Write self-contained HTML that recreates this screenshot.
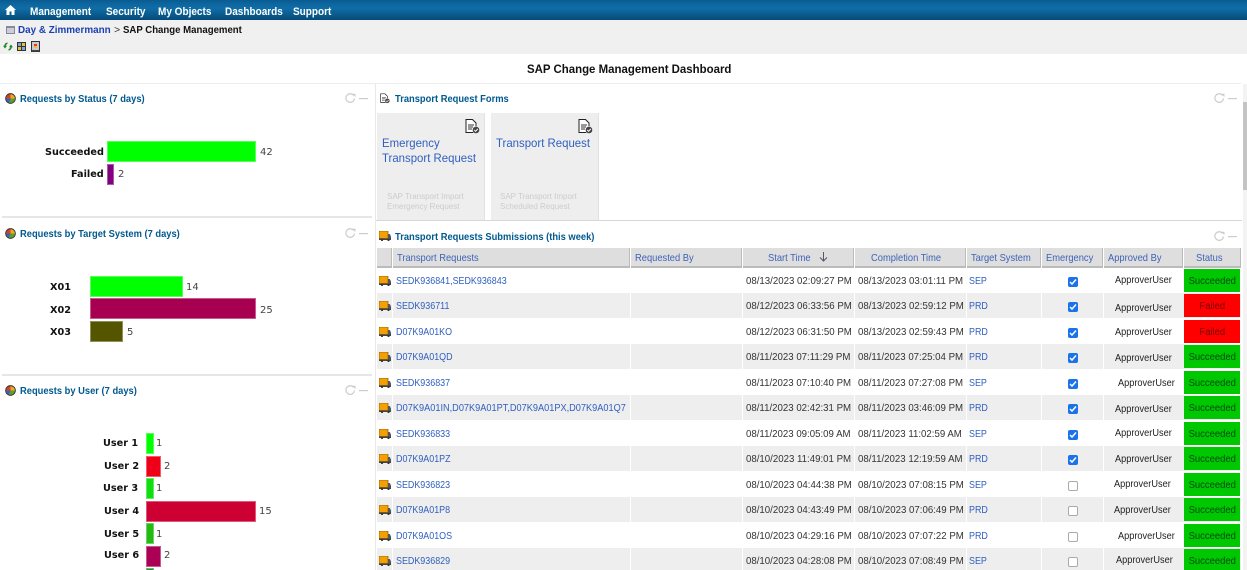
<!DOCTYPE html>
<html><head><meta charset="utf-8"><title>SAP Change Management Dashboard</title>
<style>
html,body{margin:0;padding:0;width:1247px;height:570px;overflow:hidden;background:#fff;font-family:"Liberation Sans",sans-serif}
#p{position:relative;width:1247px;height:570px;overflow:hidden}
.a,.t,.b,.l,.v,.nav,.pt,.c{position:absolute;white-space:nowrap}
.nav{top:5px;color:#fff;font:bold 11px/14px "Liberation Sans",sans-serif;transform:scaleX(.91);transform-origin:left center}
.pt{color:#00598f;font:bold 10.5px/14px "Liberation Sans",sans-serif;transform:scaleX(.89);transform-origin:left center;margin-top:1px}
.l{font:bold 9.7px/14px "DejaVu Sans",sans-serif;color:#111;margin-top:1px}
.v{font:10px/14px "DejaVu Sans",sans-serif;color:#444;margin-top:1px}
.b{box-sizing:border-box;height:21px;border:1px solid rgba(255,255,255,.35)}
.hr{position:absolute;height:2px;background:#e6e6e6}
.h{position:absolute;top:248px;height:20px;box-sizing:border-box;background:#dedede;border-bottom:2px solid #bbb;border-right:1px solid #bbb;color:#3f62b8;font:10.5px/20px "Liberation Sans",sans-serif;white-space:nowrap}
.h span{display:inline-block;transform:scaleX(.89);transform-origin:left center}
.r{position:absolute;left:377px;width:864px;height:25px;font:10.5px/25px "Liberation Sans",sans-serif;color:#333}
.e{background:#eee}
.r span{position:absolute;white-space:nowrap;top:1px;transform:scaleX(.92);transform-origin:left center}
.r span.k{color:#2f5fc0;transform:scaleX(.85)}
.sep{position:absolute;top:0;width:1px;height:25px;background:#fff}
.r span.ap{font-size:10px;color:#222;transform:scaleX(.92)}
.st{position:absolute;left:807px;top:1px;width:56px;height:23px;line-height:25px;text-align:center;background:#00c800;color:#034a12;font-size:10.5px}
.st b{font-weight:normal;display:inline-block;transform:scaleX(.9)}
.st.f{background:#ff0000;color:#700}
.cb{position:absolute;left:691px;top:9px;width:10px;height:10px;border-radius:2px;box-sizing:border-box}
.on{background:#1a73e8}
.off{background:#fff;border:1px solid #aaa}
.r svg.ck{left:692px;top:10px}
.card{position:absolute;top:113px;height:107px;background:#eee;border-right:1px solid #e2e2e2;box-sizing:border-box}
.ct{position:absolute;color:#2f5fc0;font:12px/15px "Liberation Sans",sans-serif;white-space:nowrap;transform:scaleX(.95);transform-origin:left center}
.cs{position:absolute;color:#ccc;font:8px/11px "Liberation Sans",sans-serif;white-space:nowrap}
svg{position:absolute;overflow:visible}
</style></head><body><div id="p">
<svg width="0" height="0" style="position:absolute"><defs>
<symbol id="truck" viewBox="0 0 12 10"><rect x="0" y="0" width="9" height="7.500" fill="#f5a000" stroke="#7a5a20" stroke-width=".7"/><path d="M9 3h1.800L12 5.500V8.500H9z" fill="#555"/><rect x="0" y="7.500" width="12" height="1.500" fill="#444"/><circle cx="3" cy="9" r="1.100" fill="#333"/><circle cx="9.500" cy="9" r="1.100" fill="#333"/></symbol>
<symbol id="pie" viewBox="0 0 12 12"><circle cx="6" cy="6" r="5.800" fill="#333"/><path d="M6 6V1.200A4.800 4.800 0 0 1 10.800 6z" fill="#f0a820"/><path d="M6 6h4.800A4.800 4.800 0 0 1 4 10.400z" fill="#5aa030"/><path d="M6 6L4 10.400A4.800 4.800 0 0 1 1.200 6z" fill="#3a60c0"/><path d="M6 6H1.200A4.800 4.800 0 0 1 6 1.200z" fill="#d84020"/></symbol>
<symbol id="ref" viewBox="0 0 24 11"><path d="M8.600 2.400A4.300 4.300 0 1 0 9.500 5.500" fill="none" stroke="#ccc" stroke-width="1.200"/><path d="M7.200 .8h3.300v3.300z" fill="#ccc"/><rect x="14" y="5" width="9" height="1.200" fill="#ccc"/></symbol>
<symbol id="doc" viewBox="0 0 15 15"><path d="M1 .5h6.500L11 4v9.500H1z" fill="#fff" stroke="#222" stroke-width="1"/><path d="M3 6h6M3 8h5M3 10h4" stroke="#333" stroke-width=".9"/><circle cx="11" cy="11" r="3.600" fill="#444" stroke="#fff" stroke-width=".5"/><path d="M9.300 11l1.300 1.300 2.200-2.400" fill="none" stroke="#fff" stroke-width="1"/></symbol>
<symbol id="tick" viewBox="0 0 8 8"><path d="M1 4l2 2 4-4.500" fill="none" stroke="#fff" stroke-width="1.500"/></symbol>
</defs></svg>

<!-- nav -->
<div class="a" style="left:0;top:0;width:1247px;height:20px;background:linear-gradient(#0a5c92,#0f6ea8 40%,#064a78)"></div>
<svg style="left:5px;top:5px" width="11" height="10" viewBox="0 0 11 10"><path d="M5.500 0L11 5H9.500V10H6.500V6.500H4.500V10H1.500V5H0z" fill="#fff"/></svg>
<div class="nav" style="left:30px">Management</div>
<div class="nav" style="left:106px">Security</div>
<div class="nav" style="left:158px">My Objects</div>
<div class="nav" style="left:225px">Dashboards</div>
<div class="nav" style="left:293px">Support</div>

<!-- breadcrumb -->
<div class="a" style="left:0;top:20px;width:1247px;height:34px;background:#f0f0f0"></div>
<svg style="left:6px;top:26px" width="9" height="8" viewBox="0 0 9 8"><rect width="9" height="8" fill="#889"/><rect y="2" x="1" width="7" height="5" fill="#ccd"/></svg>
<div class="t" style="left:18px;top:23px;font:bold 10.5px/14px 'Liberation Sans',sans-serif;color:#1a3fb0;transform:scaleX(.94);transform-origin:left center">Day &amp; Zimmermann</div>
<div class="t" style="left:114px;top:23px;font:10.5px/14px 'Liberation Sans',sans-serif;color:#333">&gt;</div>
<div class="t" style="left:123px;top:23px;font:bold 10.5px/14px 'Liberation Sans',sans-serif;color:#111;transform:scaleX(.915);transform-origin:left center">SAP Change Management</div>
<svg style="left:3px;top:41px" width="10" height="11" viewBox="0 0 10 11"><path d="M4.500 1.500C2.500 1.700 1.500 3 1.300 4.800H0L2 7.500 4 4.800H2.800C3 3.800 3.600 3.200 4.500 3z" fill="#1a8a1a"/><path d="M5.500 9.500C7.500 9.300 8.500 8 8.700 6.200H10L8 3.500 6 6.200H7.200C7 7.200 6.400 7.800 5.500 8z" fill="#1a8a1a"/></svg>
<svg style="left:17px;top:42px" width="9" height="9" viewBox="0 0 9 9"><rect width="9" height="9" fill="#333"/><rect x="1" y="1" width="3" height="3" fill="#7ac"/><rect x="5" y="1" width="3" height="3" fill="#eb4"/><rect x="1" y="5" width="3" height="3" fill="#eb4"/><rect x="5" y="5" width="3" height="3" fill="#7ac"/></svg>
<svg style="left:31px;top:41px" width="9" height="11" viewBox="0 0 9 11"><rect x=".5" y=".5" width="8" height="10" fill="#ccc" stroke="#333"/><rect x="1" y="9" width="7" height="1.500" fill="#444"/><rect x="3" y="3" width="3" height="2" fill="#e33"/><rect x="3" y="5" width="3" height="2" fill="#eb4"/></svg>

<div class="t" style="left:527px;top:62px;font:bold 12px/15px 'Liberation Sans',sans-serif;color:#111;transform:scaleX(.953);transform-origin:left center">SAP Change Management Dashboard</div>
<div class="a" style="left:0;top:83px;width:1241px;height:1px;background:#eee"></div>
<div class="a" style="left:375px;top:84px;width:1px;height:486px;background:#e8e8e8"></div>

<!-- left panels -->
<svg style="left:5px;top:93px" width="11" height="11"><use href="#pie" width="11" height="11"/></svg>
<div class="pt" style="left:20px;top:91px">Requests by Status (7 days)</div>
<svg style="left:345px;top:93px" width="24" height="11"><use href="#ref" width="24" height="11"/></svg>
<div class="l" style="left:45px;top:145px">Succeeded</div>
<div class="l" style="left:71px;top:167px">Failed</div>
<div class="b" style="left:107px;top:141px;width:149px;background:#00ff00"></div>
<div class="b" style="left:107px;top:164px;width:7px;background:#800080"></div>
<div class="v" style="left:260px;top:145px">42</div>
<div class="v" style="left:118px;top:167px">2</div>

<div class="hr" style="left:2px;top:216px;width:370px"></div>
<svg style="left:5px;top:228px" width="11" height="11"><use href="#pie" width="11" height="11"/></svg>
<div class="pt" style="left:20px;top:226px">Requests by Target System (7 days)</div>
<svg style="left:345px;top:228px" width="24" height="11"><use href="#ref" width="24" height="11"/></svg>
<div class="l" style="left:50px;top:280px">X01</div>
<div class="l" style="left:50px;top:303px">X02</div>
<div class="l" style="left:50px;top:325px">X03</div>
<div class="b" style="left:90px;top:276px;width:93px;background:#00ff00"></div>
<div class="b" style="left:90px;top:298px;width:166px;background:#a80050"></div>
<div class="b" style="left:90px;top:321px;width:33px;background:#555500"></div>
<div class="v" style="left:186px;top:280px">14</div>
<div class="v" style="left:260px;top:303px">25</div>
<div class="v" style="left:127px;top:325px">5</div>

<div class="hr" style="left:2px;top:374px;width:370px"></div>
<svg style="left:5px;top:385px" width="11" height="11"><use href="#pie" width="11" height="11"/></svg>
<div class="pt" style="left:20px;top:383px">Requests by User (7 days)</div>
<svg style="left:345px;top:385px" width="24" height="11"><use href="#ref" width="24" height="11"/></svg>
<div class="l" style="left:103px;top:436px">User 1</div>
<div class="l" style="left:104px;top:459px">User 2</div>
<div class="l" style="left:103px;top:481px">User 3</div>
<div class="l" style="left:104px;top:504px">User 4</div>
<div class="l" style="left:104px;top:527px">User 5</div>
<div class="l" style="left:104px;top:548px">User 6</div>
<div class="b" style="left:146px;top:433px;width:8px;background:#00ff00"></div>
<div class="b" style="left:146px;top:456px;width:15px;background:#f00018"></div>
<div class="b" style="left:146px;top:478px;width:8px;background:#11dd11"></div>
<div class="b" style="left:146px;top:501px;width:110px;background:#cc0033"></div>
<div class="b" style="left:146px;top:523px;width:8px;background:#22bb11"></div>
<div class="b" style="left:146px;top:546px;width:15px;background:#aa0055"></div>
<div class="b" style="left:146px;top:568px;width:8px;background:#229922"></div>
<div class="v" style="left:156px;top:436px">1</div>
<div class="v" style="left:164px;top:459px">2</div>
<div class="v" style="left:156px;top:481px">1</div>
<div class="v" style="left:259px;top:504px">15</div>
<div class="v" style="left:156px;top:527px">1</div>
<div class="v" style="left:164px;top:548px">2</div>

<!-- forms -->
<svg style="left:380px;top:93px" width="10" height="11" viewBox="0 0 15 15"><use href="#doc" width="15" height="15"/></svg>
<div class="pt" style="left:395px;top:91px">Transport Request Forms</div>
<svg style="left:1214px;top:93px" width="24" height="11"><use href="#ref" width="24" height="11"/></svg>
<div class="card" style="left:377px;width:108px"></div>
<div class="card" style="left:491px;width:108px"></div>
<svg style="left:465px;top:119px" width="15" height="15"><use href="#doc" width="15" height="15"/></svg>
<svg style="left:578px;top:119px" width="15" height="15"><use href="#doc" width="15" height="15"/></svg>
<div class="ct" style="left:382px;top:136px">Emergency</div>
<div class="ct" style="left:382px;top:151px">Transport Request</div>
<div class="ct" style="left:496px;top:136px">Transport Request</div>
<div class="cs" style="left:387px;top:191px">SAP Transport Import</div>
<div class="cs" style="left:387px;top:201px">Emergency Request</div>
<div class="cs" style="left:500px;top:191px">SAP Transport Import</div>
<div class="cs" style="left:500px;top:201px">Scheduled Request</div>
<div class="a" style="left:376px;top:220px;width:866px;height:1px;background:#d8d8d8"></div>

<!-- table title -->
<svg style="left:379px;top:231px" width="12" height="10"><use href="#truck" width="12" height="10"/></svg>
<div class="pt" style="left:395px;top:229px">Transport Requests Submissions (this week)</div>
<svg style="left:1214px;top:231px" width="24" height="11"><use href="#ref" width="24" height="11"/></svg>

<!-- table header -->
<div class="h" style="left:377px;width:15px"></div>
<div class="h" style="left:393px;width:237px;padding-left:4px"><span>Transport Requests</span></div>
<div class="h" style="left:631px;width:111px;padding-left:4px"><span>Requested By</span></div>
<div class="h" style="left:743px;width:111px;padding-left:25px"><span>Start Time</span></div>
<svg style="left:819px;top:252px" width="9" height="10" viewBox="0 0 9 10"><path d="M4.500 0V9M1 5.500L4.500 9 8 5.500" fill="none" stroke="#556" stroke-width="1"/></svg>
<div class="h" style="left:855px;width:111px;padding-left:16px"><span>Completion Time</span></div>
<div class="h" style="left:967px;width:74px;padding-left:4px"><span>Target System</span></div>
<div class="h" style="left:1042px;width:61px;padding-left:4px"><span>Emergency</span></div>
<div class="h" style="left:1104px;width:79px;padding-left:4px"><span>Approved By</span></div>
<div class="h" style="left:1184px;width:57px;padding-left:12px"><span>Status</span></div>

<!-- rows -->
<div class="r" style="top:268px"><svg style="left:2px;top:8px" width="12" height="10"><use href="#truck" width="12" height="10"/></svg><span class="k" style="left:19px">SEDK936841,SEDK936843</span><span style="left:369px">08/13/2023 02:09:27 PM</span><span style="left:481px">08/13/2023 03:01:11 PM</span><span class="k" style="left:592px">SEP</span><i class="cb on"></i><svg class="ck" width="8" height="8"><use href="#tick" width="8" height="8"/></svg><span class="ap" style="left:738px;top:0">ApproverUser</span><div class="st"><b>Succeeded</b></div></div>

<div class="r e" style="top:293px"><i class="sep" style="left:15px"></i><i class="sep" style="left:253px"></i><i class="sep" style="left:365px"></i><i class="sep" style="left:477px"></i><i class="sep" style="left:589px"></i><i class="sep" style="left:664px"></i><i class="sep" style="left:726px"></i><svg style="left:2px;top:8px" width="12" height="10"><use href="#truck" width="12" height="10"/></svg><span class="k" style="left:19px">SEDK936711</span><span style="left:369px">08/12/2023 06:33:56 PM</span><span style="left:481px">08/13/2023 02:59:12 PM</span><span class="k" style="left:592px">PRD</span><i class="cb on"></i><svg class="ck" width="8" height="8"><use href="#tick" width="8" height="8"/></svg><span class="ap" style="left:738px;top:3px">ApproverUser</span><div class="st f"><b>Failed</b></div></div>

<div class="r" style="top:319px"><svg style="left:2px;top:8px" width="12" height="10"><use href="#truck" width="12" height="10"/></svg><span class="k" style="left:19px">D07K9A01KO</span><span style="left:369px">08/12/2023 06:31:50 PM</span><span style="left:481px">08/13/2023 02:59:43 PM</span><span class="k" style="left:592px">PRD</span><i class="cb on"></i><svg class="ck" width="8" height="8"><use href="#tick" width="8" height="8"/></svg><span class="ap" style="left:738px;top:1px">ApproverUser</span><div class="st f"><b>Failed</b></div></div>

<div class="r e" style="top:344px"><i class="sep" style="left:15px"></i><i class="sep" style="left:253px"></i><i class="sep" style="left:365px"></i><i class="sep" style="left:477px"></i><i class="sep" style="left:589px"></i><i class="sep" style="left:664px"></i><i class="sep" style="left:726px"></i><svg style="left:2px;top:8px" width="12" height="10"><use href="#truck" width="12" height="10"/></svg><span class="k" style="left:19px">D07K9A01QD</span><span style="left:369px">08/11/2023 07:11:29 PM</span><span style="left:481px">08/11/2023 07:25:04 PM</span><span class="k" style="left:592px">PRD</span><i class="cb on"></i><svg class="ck" width="8" height="8"><use href="#tick" width="8" height="8"/></svg><span class="ap" style="left:738px;top:2px">ApproverUser</span><div class="st"><b>Succeeded</b></div></div>

<div class="r" style="top:370px"><svg style="left:2px;top:8px" width="12" height="10"><use href="#truck" width="12" height="10"/></svg><span class="k" style="left:19px">SEDK936837</span><span style="left:369px">08/11/2023 07:10:40 PM</span><span style="left:481px">08/11/2023 07:27:08 PM</span><span class="k" style="left:592px">SEP</span><i class="cb on"></i><svg class="ck" width="8" height="8"><use href="#tick" width="8" height="8"/></svg><span class="ap" style="left:741px;top:1px">ApproverUser</span><div class="st"><b>Succeeded</b></div></div>

<div class="r e" style="top:395px"><i class="sep" style="left:15px"></i><i class="sep" style="left:253px"></i><i class="sep" style="left:365px"></i><i class="sep" style="left:477px"></i><i class="sep" style="left:589px"></i><i class="sep" style="left:664px"></i><i class="sep" style="left:726px"></i><svg style="left:2px;top:8px" width="12" height="10"><use href="#truck" width="12" height="10"/></svg><span class="k" style="left:19px;transform:scaleX(.875)">D07K9A01IN,D07K9A01PT,D07K9A01PX,D07K9A01Q7</span><span style="left:369px">08/11/2023 02:42:31 PM</span><span style="left:481px">08/11/2023 03:46:09 PM</span><span class="k" style="left:592px">PRD</span><i class="cb on"></i><svg class="ck" width="8" height="8"><use href="#tick" width="8" height="8"/></svg><span class="ap" style="left:738px;top:2px">ApproverUser</span><div class="st"><b>Succeeded</b></div></div>

<div class="r" style="top:421px"><svg style="left:2px;top:8px" width="12" height="10"><use href="#truck" width="12" height="10"/></svg><span class="k" style="left:19px">SEDK936833</span><span style="left:369px">08/11/2023 09:05:09 AM</span><span style="left:481px">08/11/2023 11:02:59 AM</span><span class="k" style="left:592px">SEP</span><i class="cb on"></i><svg class="ck" width="8" height="8"><use href="#tick" width="8" height="8"/></svg><span class="ap" style="left:738px;top:0">ApproverUser</span><div class="st"><b>Succeeded</b></div></div>

<div class="r e" style="top:446px"><i class="sep" style="left:15px"></i><i class="sep" style="left:253px"></i><i class="sep" style="left:365px"></i><i class="sep" style="left:477px"></i><i class="sep" style="left:589px"></i><i class="sep" style="left:664px"></i><i class="sep" style="left:726px"></i><svg style="left:2px;top:8px" width="12" height="10"><use href="#truck" width="12" height="10"/></svg><span class="k" style="left:19px">D07K9A01PZ</span><span style="left:369px">08/10/2023 11:49:01 PM</span><span style="left:481px">08/11/2023 12:19:59 AM</span><span class="k" style="left:592px">PRD</span><i class="cb on"></i><svg class="ck" width="8" height="8"><use href="#tick" width="8" height="8"/></svg><span class="ap" style="left:738px;top:1px">ApproverUser</span><div class="st"><b>Succeeded</b></div></div>

<div class="r" style="top:472px"><svg style="left:2px;top:8px" width="12" height="10"><use href="#truck" width="12" height="10"/></svg><span class="k" style="left:19px">SEDK936823</span><span style="left:369px">08/10/2023 04:44:38 PM</span><span style="left:481px">08/10/2023 07:08:15 PM</span><span class="k" style="left:592px">SEP</span><i class="cb off"></i><span class="ap" style="left:737px;top:0">ApproverUser</span><div class="st"><b>Succeeded</b></div></div>

<div class="r e" style="top:497px"><i class="sep" style="left:15px"></i><i class="sep" style="left:253px"></i><i class="sep" style="left:365px"></i><i class="sep" style="left:477px"></i><i class="sep" style="left:589px"></i><i class="sep" style="left:664px"></i><i class="sep" style="left:726px"></i><svg style="left:2px;top:8px" width="12" height="10"><use href="#truck" width="12" height="10"/></svg><span class="k" style="left:19px">D07K9A01P8</span><span style="left:369px">08/10/2023 04:43:49 PM</span><span style="left:481px">08/10/2023 07:06:49 PM</span><span class="k" style="left:592px">PRD</span><i class="cb off"></i><span class="ap" style="left:737px;top:1px">ApproverUser</span><div class="st"><b>Succeeded</b></div></div>

<div class="r" style="top:523px"><svg style="left:2px;top:8px" width="12" height="10"><use href="#truck" width="12" height="10"/></svg><span class="k" style="left:19px">D07K9A01OS</span><span style="left:369px">08/10/2023 04:29:16 PM</span><span style="left:481px">08/10/2023 07:07:22 PM</span><span class="k" style="left:592px">PRD</span><i class="cb off"></i><span class="ap" style="left:741px;top:1px">ApproverUser</span><div class="st"><b>Succeeded</b></div></div>

<div class="r e" style="top:548px"><i class="sep" style="left:15px"></i><i class="sep" style="left:253px"></i><i class="sep" style="left:365px"></i><i class="sep" style="left:477px"></i><i class="sep" style="left:589px"></i><i class="sep" style="left:664px"></i><i class="sep" style="left:726px"></i><svg style="left:2px;top:8px" width="12" height="10"><use href="#truck" width="12" height="10"/></svg><span class="k" style="left:19px">SEDK936829</span><span style="left:369px">08/10/2023 04:28:08 PM</span><span style="left:481px">08/10/2023 07:08:49 PM</span><span class="k" style="left:592px">SEP</span><i class="cb off"></i><span class="ap" style="left:739px;top:0">ApproverUser</span><div class="st"><b>Succeeded</b></div></div>

<!-- scrollbar -->
<div class="a" style="left:1243px;top:84px;width:4px;height:486px;background:#f3f3f3"></div>
<div class="a" style="left:1243px;top:102px;width:4px;height:88px;background:#c4c4c4"></div>
</div></body></html>
